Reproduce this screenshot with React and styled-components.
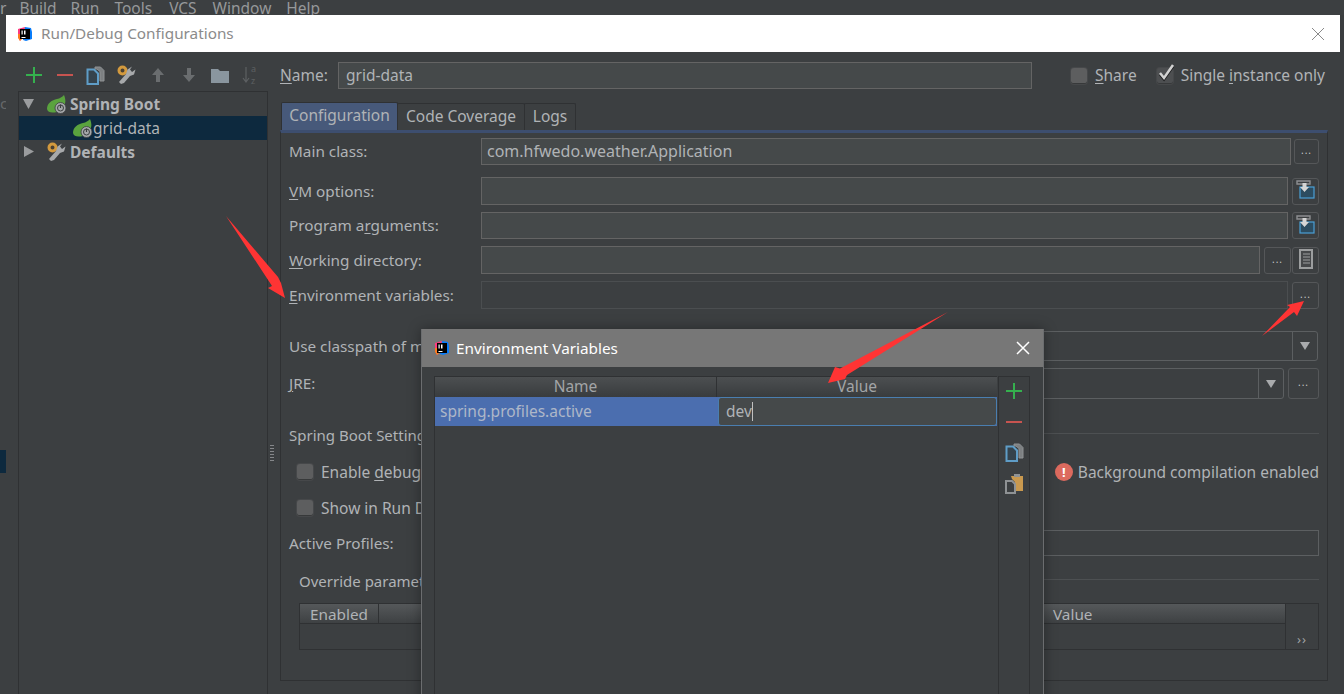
import React from 'react';
import styled, { createGlobalStyle } from 'styled-components';

const Global = createGlobalStyle`
  html, body { margin: 0; padding: 0; background: #3c3f41; overflow: hidden; }
  #root { height: 694px; }
`;

const FONT = `"Noto Sans", "Open Sans", sans-serif`;

const Page = styled.div`
  position: relative; width: 1344px; height: 694px; overflow: hidden;
  display: flex; flex-direction: column; background: #3c3f41;
  font: 15.5px/20px ${FONT}; color: #b0b3b6;
`;
const MenuBar = styled.div`
  height: 15px; flex: none; display: flex; overflow: hidden; color: #96989a; line-height: 17px;
`;
const MenuItem = styled.span`margin-left: ${p => p.$left}px; white-space: nowrap;`;
const Desk = styled.div`flex: 1; min-height: 0; display: flex;`;
const LeftStrip = styled.div`
  width: 6px; flex: none; overflow: hidden; display: flex; flex-direction: column; color: #66686a;
`;
const StripHint = styled.span`margin: 78px 0 0 0; font-size: 15px; white-space: nowrap;`;
const StripSelection = styled.div`height: 23px; margin-top: 337px; background: #0d293e;`;
const RightStrip = styled.div`width: 4px; flex: none; background: #3a3d3f;`;
const Window = styled.div`flex: 1; min-width: 0; display: flex; flex-direction: column;`;
const TitleBar = styled.div`
  height: 37px; flex: none; background: #fff; display: flex; align-items: center; box-sizing: border-box;
  padding: 0 15px 0 11px; color: #8b8b8b; gap: 8px;
`;
const TitleText = styled.span`flex: 1; margin-bottom: 2px; white-space: nowrap; font-size: 15.3px;`;
const Body = styled.div`flex: 1; min-height: 0; display: flex;`;
const LeftPane = styled.div`width: 262px; flex: none; display: flex; flex-direction: column; padding-left: 12px; box-sizing: border-box;`;
const Toolbar = styled.div`height: 39px; box-sizing: border-box; flex: none; display: flex; align-items: center; padding: 7px 0 0 0;`;
const ToolSlot = styled.span`width: 31px; flex: none; display: flex; justify-content: center;`;
const Tree = styled.div`
  flex: 1; border: 1px solid #2f3133; border-bottom: 0; display: flex; flex-direction: column;
`;
const TreeRow = styled.div`
  height: 24px; display: flex; align-items: center; box-sizing: border-box;
  padding-left: ${p => p.$indent}px; gap: ${p => p.$gap}px;
  background: ${p => (p.$selected ? '#0d293e' : 'transparent')};
  font-weight: ${p => (p.$bold ? 700 : 400)};
`;
const TreeText = styled.span`margin-left: ${p => p.$left || 0}px; margin-bottom: 1px;`;
const RightPane = styled.div`
  position: relative; flex: 1; min-width: 0; display: flex; flex-direction: column; padding: 0 12px 0 12px;
`;
const Grip = styled.div`
  position: absolute; left: 2px; top: 393px; width: 4px; height: 18px;
  background: repeating-linear-gradient(#85878a 0 1px, transparent 1px 3px);
`;
const NameRow = styled.div`
  height: 27px; margin-top: 10px; flex: none; display: flex; align-items: center;
`;
const NameLabel = styled.span`width: 58px; flex: none; margin-bottom: 2px;`;
const NameField = styled.div`
  width: 694px; height: 27px; box-sizing: border-box; background: #45494a; border: 1px solid #646464;
  padding: 0 7px; line-height: 25px; flex: none;
`;
const Flag = styled.label`display: flex; align-items: center; gap: 8px; margin-left: ${p => p.$left}px; flex: none; white-space: nowrap;`;
const FlagText = styled.span`margin-bottom: 2px;`;
const Box = styled.span`
  width: 16px; height: 16px; flex: none; box-sizing: border-box; border-radius: 3px;
  background: ${p => (p.$checked ? '#4d4f51' : '#5d5e5f')}; border-bottom: 1px solid #37393a;
  box-shadow: 0 0 0 1px #46484a; display: flex; align-items: center; justify-content: center; overflow: visible;
`;
const Tabs = styled.div`margin-top: 13px; height: 28px; flex: none; display: flex; align-items: flex-end; padding-left: 1px;`;
const Tab = styled.div`
  width: ${p => p.$w}px; height: ${p => (p.$active ? 28 : 27)}px; box-sizing: border-box; padding-bottom: 3px; white-space: nowrap;
  display: flex; align-items: center; justify-content: center; background: ${p => (p.$active ? '#47597a' : 'transparent')};
  border: 1px solid #2f3133; border-bottom: 0; margin-right: -1px; border-radius: 2px 2px 0 0;
`;
const Panel = styled.div`
  flex: 1; min-height: 0; margin-bottom: 13px; border: 1px solid #2f3133; border-top: 3px solid #3d4e6f;
  padding: 5px 8px 0 8px; display: flex; flex-direction: column; box-sizing: border-box;
`;
const FormRow = styled.div`
  height: ${p => p.$h}px; margin-top: ${p => p.$gap || 0}px; flex: none; display: flex; align-items: center;
`;
const Label = styled.span`width: 192px; flex: none; white-space: nowrap; margin-bottom: 1px; font-size: 15.3px;`;
const Mn = styled.u`text-underline-offset: 2px; text-decoration-thickness: 1px;`;
const Field = styled.div`
  flex: 1; min-width: 0; align-self: stretch; box-sizing: border-box; padding: 0 5px; line-height: 24px;
  font-size: ${p => (p.$wide ? '16px' : 'inherit')};
  background: ${p => (p.$flat ? 'transparent' : '#45494a')};
  border: 1px solid ${p => (p.$flat ? '#4b4e50' : '#646464')};
  margin-right: ${p => p.$mr ?? 4}px;
`;
const ActiveField = styled(Field)`border-color: #5c5f61;`;
const Dots = styled.button`
  width: ${p => p.$w || 27}px; height: ${p => p.$h || 27}px; flex: none; padding: 0 0 3px; box-sizing: border-box;
  background: transparent; border: 1px solid #555759; border-radius: 3px; color: #c8c8c8;
  font: 10px/10px ${FONT}; letter-spacing: 1px; display: flex; align-items: center; justify-content: center;
  margin-right: ${p => p.$mr || 0}px;
`;
const Combo = styled.div`
  flex: 1; align-self: stretch; box-sizing: border-box; border: 1px solid #5c5f61; border-radius: 3px;
  display: flex; justify-content: flex-end; margin-right: ${p => p.$mr || 0}px;
`;
const ComboArrow = styled.span`
  width: 24px; border-left: 1px solid #5c5f61; display: flex; align-items: center; justify-content: center;
`;
const Caret = styled.span`
  width: 0; height: 0; border-left: 5px solid transparent; border-right: 5px solid transparent; border-top: 8px solid #a9abad;
`;
const SectionRow = styled.div`
  height: 20px; margin-top: ${p => p.$gap}px; margin-left: ${p => p.$indent || 0}px; flex: none;
  display: flex; align-items: center; gap: 6px; white-space: nowrap;
`;
const SectionText = styled.span`margin-bottom: 1px; font-size: 15px;`;
const Rule = styled.span`flex: 1; height: 1px; background: #4d5052; margin-top: -4px;`;
const OptionRow = styled.div`
  height: 20px; margin-top: ${p => p.$gap}px; flex: none; display: flex; align-items: center; padding-left: 8px;
`;
const Option = styled.span`flex: 1; display: flex; align-items: center; gap: 8px; white-space: nowrap;`;
const OptionText = styled.span`margin-bottom: 1px;`;
const Warning = styled.span`display: flex; align-items: center; gap: 5px; white-space: nowrap;`;
const WarnDot = styled.span`
  width: 18px; height: 18px; border-radius: 50%; background: #dc6a5e; color: #fff; font-weight: 700;
  font-size: 13px; line-height: 18px; text-align: center;
`;
const ParamTable = styled.div`
  margin: 12px 0 0 10px; height: 47px; flex: none; box-sizing: border-box; border: 1px solid #2f3133;
  display: grid; grid-template-columns: 1fr 32px; grid-template-rows: 20px 1fr;
`;
const ParamHead = styled.div`
  display: grid; grid-template-columns: 79px 1fr 243px;
  background: linear-gradient(#55585a, #3e4143); border-bottom: 1px solid #2f3133; border-right: 1px solid #2f3133;
`;
const HeadCell = styled.span`
  padding-left: ${p => p.$pad}px; line-height: 20px; font-size: 15.3px; text-align: ${p => p.$align || 'left'};
  border-right: ${p => (p.$last ? 0 : '1px solid #2f3133')};
`;
const Corner = styled.div`
  grid-row: 1 / 3; grid-column: 2; display: flex; align-items: flex-end; justify-content: center;
  padding-bottom: 3px; color: #a0a2a4; font-size: 13px; line-height: 14px; letter-spacing: 1px;
`;
const ParamBody = styled.div`border-right: 1px solid #2f3133;`;
const Dialog = styled.div`
  position: absolute; left: 421px; top: 329px; width: 623px; height: 400px; box-sizing: border-box;
  background: #3c3f41; border: 1px solid #6b6d6f; border-top: 0;
  box-shadow: 0 0 12px rgba(0, 0, 0, .35); display: flex; flex-direction: column;
`;
const DialogTitle = styled.div`
  height: 38px; flex: none; background: #777; color: #fff; display: flex; align-items: center;
  padding: 0 13px 0 12px; gap: 6px;
`;
const DialogTitleText = styled.span`flex: 1; white-space: nowrap; font-size: 15.3px;`;
const DialogBody = styled.div`display: flex; padding: 9px 0 0 12px; flex: 1;`;
const EnvTable = styled.div`
  width: 563px; box-sizing: border-box; flex: none; border-left: 1px solid #2f3133;
`;
const EnvHead = styled.div`
  height: 21px; display: grid; grid-template-columns: 282px 1fr;
  background: linear-gradient(#4d5052, #393c3e); box-shadow: inset 0 1px #2f3133;
`;
const EnvHeadCell = styled.span`text-align: center; line-height: 20px; color: #a3a5a7; border-right: ${p => (p.$last ? 0 : '1px solid #2f3133')};`;
const EnvRow = styled.div`
  height: 29px; display: grid; grid-template-columns: 282px 1fr; background: #4b6eaf;
`;
const EnvKey = styled.span`padding-left: 5px; line-height: 28px; color: #aeb7c8;`;
const EnvEdit = styled.div`
  background: #45494a; border: 1px solid #4a7eb0; border-radius: 3px; box-sizing: border-box;
  padding-left: 7px; line-height: 26px; margin-left: 1px; display: flex;
`;
const TextCaret = styled.span`width: 1px; height: 19px; align-self: center; background: #c0c0c0;`;
const SideBar = styled.div`
  width: 32px; box-sizing: border-box; flex: none; border: 1px solid #2f3133; border-bottom: 0; margin-left: 1px;
  display: flex; flex-direction: column; align-items: center;
`;
const SideSlot = styled.span`height: 31px; width: 100%; box-sizing: border-box; padding-bottom: 4px; flex: none; display: flex; align-items: center; justify-content: center;`;
const ArrowLayer = styled.svg`position: absolute; left: 0; top: 0; pointer-events: none;`;

const Idea = () => (
  <svg width="16" height="16" viewBox="0 0 16 16" style={{ flex: 'none' }}>
    <path fill="#fc3a7f" d="M1 3 8 1 7 9 3 15 1 10z" />
    <path fill="#fe7c1f" d="M1 8 5 8 5 13 3 15 1 12z" />
    <path fill="#087cfa" d="M8 1 14 2 15 6 15 13 9 15 6 14z" />
    <rect x="3" y="3" width="10" height="10" fill="#000" />
    <rect x="4.500" y="4.500" width="1.200" height="4" fill="#fff" />
    <rect x="7" y="4.500" width="1.500" height="4" fill="#fff" />
    <rect x="4.500" y="11" width="4" height="1" fill="#fff" />
  </svg>
);
const Plus = () => (
  <svg width="16" height="16" viewBox="0 0 16 16"><path d="M8 0v16M0 8h16" stroke="#35b04e" strokeWidth="2" /></svg>
);
const Minus = () => (
  <svg width="16" height="16" viewBox="0 0 16 16"><path d="M0 8h16" stroke="#c75450" strokeWidth="2" /></svg>
);
const Copy = () => (
  <svg width="19" height="19" viewBox="0 0 19 19">
    <path d="M9 1h5.500L18 4.500V15h-4V5.500L11 3H9z" fill="#7d8082" stroke="#8f9294" strokeWidth="1" />
    <path d="M1.500 3.500h6.500l4 4V18h-10.500z" fill="#35434d" stroke="#5f9dc7" strokeWidth="2" />
  </svg>
);
const Paste = () => (
  <svg width="19" height="20" viewBox="0 0 19 20">
    <path d="M6 2h12v15H10V8L7 5z" fill="#c9994f" />
    <rect x="9" y="0" width="6" height="3" fill="#8f9294" />
    <path d="M1 7h6l3 3v9H1z" fill="#3c3f41" stroke="#8f9294" strokeWidth="2" />
  </svg>
);
const Wrench = () => (
  <svg width="20" height="20" viewBox="0 0 20 20" style={{ flex: 'none' }}>
    <circle cx="5.500" cy="5.500" r="3.500" fill="#4a4032" stroke="#d39a3e" strokeWidth="3" />
    <path d="M2 17l7-8 1.500-4.500L15 1.500 13 4.500l2 2.500 3.500-2.500L17 9.500l-4 1.500-6 7-3 1z" fill="#a7a9ab" />
  </svg>
);
const Up = () => (<svg width="16" height="16" viewBox="0 0 16 16"><path d="M8 1l6 7h-4v7H6V8H2z" fill="#6a6d6f" /></svg>);
const Down = () => (<svg width="16" height="16" viewBox="0 0 16 16"><path d="M8 15l6-7h-4V1H6v7H2z" fill="#6a6d6f" /></svg>);
const Folder = () => (<svg width="18" height="15" viewBox="0 0 18 15"><path d="M0 1h7l2 2h9v12H0z" fill="#8a969f" /></svg>);
const Sort = () => (
  <svg width="18" height="20" viewBox="0 0 18 20">
    <path d="M4 2v15M1 13l3 4 3-4" fill="none" stroke="#5d6062" strokeWidth="1.200" />
    <text x="9" y="7" fontSize="9" fill="#5d6062" fontFamily="Noto Sans">a</text>
    <text x="9" y="19" fontSize="9" fill="#5d6062" fontFamily="Noto Sans">z</text>
  </svg>
);
const Spring = () => (
  <svg width="20" height="19" viewBox="0 0 20 19" style={{ flex: 'none' }}>
    <path d="M0 14C0 8 5 5 10 4c3-.6 5-2 7-4 2 5 2 9-1 11l-6 6c-5 1-9 1-10-3z" fill="#5aa33e" />
    <circle cx="13.500" cy="13" r="5.500" fill="#a5a7a9" stroke="#3c3f41" strokeWidth=".8" />
    <circle cx="13.500" cy="13" r="3" fill="none" stroke="#3c3f41" strokeWidth="1" />
    <path d="M13.500 9.500v3.500" stroke="#3c3f41" strokeWidth="1.200" />
  </svg>
);
const Import = () => (
  <svg width="19" height="19" viewBox="0 0 19 19">
    <path d="M1 1h13v3H1z" fill="none" stroke="#8d8f91" strokeWidth="1.400" />
    <rect x="4" y="7" width="14" height="11" fill="#2c4c60" stroke="#4a9fd6" strokeWidth="1.200" />
    <path d="M6.500 3v4H4l4.500 5 4.500-5h-2.500V3z" fill="#d5d5d5" />
  </svg>
);
const Doc = () => (
  <svg width="14" height="20" viewBox="0 0 14 20">
    <rect width="14" height="20" fill="#9c9e9f" />
    <rect x="2" y="2" width="10" height="16" fill="#46484a" />
    <path d="M4 5h7M4 8h7M4 11h7M4 14h7" stroke="#9c9e9f" />
  </svg>
);
const Close = ({ color, width = 1 }) => (
  <svg width="14" height="14" viewBox="0 0 14 14"><path d="M1 1l12 12M13 1L1 13" stroke={color} strokeWidth={width} /></svg>
);
const Tri = ({ dir }) => (
  <svg width="12" height="12" viewBox="0 0 12 12" style={{ flex: 'none' }}>
    <path d={dir === 'down' ? 'M0 1h11L5.500 11z' : 'M1 0v11L11 5.500z'} fill="#9a9c9e" />
  </svg>
);
const Check = () => (
  <svg width="18" height="18" viewBox="0 0 18 18" style={{ flex: 'none', marginTop: -5, marginRight: -3 }}>
    <path d="M3 9l4 5 9-13" fill="none" stroke="#1f2021" strokeWidth="2.500" transform="translate(0 1.500)" />
    <path d="M3 9l4 5 9-13" fill="none" stroke="#d2d2d2" strokeWidth="2.500" />
  </svg>
);

const menu = [['r', 0], ['Build', 13], ['Run', 14], ['Tools', 15], ['VCS', 17], ['Window', 16], ['Help', 15]];

export default function App() {
  return (
    <Page>
      <Global />
      <MenuBar>{menu.map(([t, l]) => <MenuItem key={t} $left={l}>{t}</MenuItem>)}</MenuBar>
      <Desk>
        <LeftStrip>
          <StripHint>ce</StripHint>
          <StripSelection />
        </LeftStrip>
        <Window>
          <TitleBar>
            <Idea />
            <TitleText>Run/Debug Configurations</TitleText>
            <Close color="#8a8a8a" />
          </TitleBar>
          <Body>
            <LeftPane>
              <Toolbar>
                <ToolSlot><Plus /></ToolSlot>
                <ToolSlot><Minus /></ToolSlot>
                <ToolSlot><Copy /></ToolSlot>
                <ToolSlot><Wrench /></ToolSlot>
                <ToolSlot><Up /></ToolSlot>
                <ToolSlot><Down /></ToolSlot>
                <ToolSlot><Folder /></ToolSlot>
                <ToolSlot><Sort /></ToolSlot>
              </Toolbar>
              <Tree>
                <TreeRow $indent={4} $gap={12} $bold><Tri dir="down" /><Spring /><TreeText $left={-9}>Spring Boot</TreeText></TreeRow>
                <TreeRow $indent={54} $gap={0} $selected><Spring /><TreeText>grid-data</TreeText></TreeRow>
                <TreeRow $indent={4} $gap={12} $bold><Tri dir="right" /><Wrench /><TreeText $left={-9}>Defaults</TreeText></TreeRow>
              </Tree>
            </LeftPane>
            <RightPane>
              <Grip />
              <NameRow>
                <NameLabel><Mn>N</Mn>ame:</NameLabel>
                <NameField>grid-data</NameField>
                <Flag $left={39}><Box /><FlagText><Mn>S</Mn>hare</FlagText></Flag>
                <Flag $left={20}><Box $checked><Check /></Box><FlagText>Single <Mn>i</Mn>nstance only</FlagText></Flag>
              </NameRow>
              <Tabs>
                <Tab $active $w={117}>Configuration</Tab>
                <Tab $w={128}>Code Coverage</Tab>
                <Tab $w={52}>Logs</Tab>
              </Tabs>
              <Panel>
                <FormRow $h={27}>
                  <Label>Main class:</Label>
                  <Field $mr={3} $wide>com.hfwedo.weather.Application</Field>
                  <Dots $w={25} $h={25}>...</Dots>
                </FormRow>
                <FormRow $h={28} $gap={12}>
                  <Label><Mn>V</Mn>M options:</Label>
                  <Field />
                  <Dots><Import /></Dots>
                </FormRow>
                <FormRow $h={27} $gap={7}>
                  <Label>Program a<Mn>r</Mn>guments:</Label>
                  <Field />
                  <Dots><Import /></Dots>
                </FormRow>
                <FormRow $h={28} $gap={7}>
                  <Label><Mn>W</Mn>orking directory:</Label>
                  <Field />
                  <Dots $mr={1}>...</Dots>
                  <Dots><Doc /></Dots>
                </FormRow>
                <FormRow $h={28} $gap={7}>
                  <Label><Mn>E</Mn>nvironment variables:</Label>
                  <Field $flat />
                  <Dots>...</Dots>
                </FormRow>
                <FormRow $h={30} $gap={22}>
                  <Label>Use classpath of module:</Label>
                  <Combo $mr={1}><ComboArrow><Caret /></ComboArrow></Combo>
                </FormRow>
                <FormRow $h={31} $gap={7}>
                  <Label><Mn>J</Mn>RE:</Label>
                  <Combo $mr={4}><ComboArrow><Caret /></ComboArrow></Combo>
                  <Dots $w={31} $h={31}>...</Dots>
                </FormRow>
                <SectionRow $gap={26}><SectionText>Spring Boot Settings</SectionText><Rule /></SectionRow>
                <OptionRow $gap={17}>
                  <Option><Box /><OptionText>Enable <Mn>d</Mn>ebug output</OptionText></Option>
                  <Warning><WarnDot>!</WarnDot><OptionText>Background compilation enabled</OptionText></Warning>
                </OptionRow>
                <OptionRow $gap={16}>
                  <Option><Box /><OptionText>Show in Run Dashboard</OptionText></Option>
                </OptionRow>
                <FormRow $h={26} $gap={12}>
                  <Label>Active Profiles:</Label>
                  <ActiveField $flat $mr={0} />
                </FormRow>
                <SectionRow $gap={15} $indent={10}><SectionText>Override parameters</SectionText><Rule /></SectionRow>
                <ParamTable>
                  <ParamHead>
                    <HeadCell $pad={10}>Enabled</HeadCell>
                    <HeadCell $pad={0} $align="center">Name</HeadCell>
                    <HeadCell $pad={11} $last>Value</HeadCell>
                  </ParamHead>
                  <Corner>››</Corner>
                  <ParamBody />
                </ParamTable>
              </Panel>
            </RightPane>
          </Body>
        </Window>
        <RightStrip />
      </Desk>
      <Dialog>
        <DialogTitle>
          <Idea />
          <DialogTitleText>Environment Variables</DialogTitleText>
          <Close color="#fff" width={1.5} />
        </DialogTitle>
        <DialogBody>
          <EnvTable>
            <EnvHead>
              <EnvHeadCell>Name</EnvHeadCell>
              <EnvHeadCell $last>Value</EnvHeadCell>
            </EnvHead>
            <EnvRow>
              <EnvKey>spring.profiles.active</EnvKey>
              <EnvEdit>dev<TextCaret /></EnvEdit>
            </EnvRow>
          </EnvTable>
          <SideBar>
            <SideSlot><Plus /></SideSlot>
            <SideSlot><Minus /></SideSlot>
            <SideSlot><Copy /></SideSlot>
            <SideSlot><Paste /></SideSlot>
          </SideBar>
        </DialogBody>
      </Dialog>
      <ArrowLayer width="1344" height="694" viewBox="0 0 1344 694">
        <polygon fill="#ff3434" points="226,216 278,277 281,283 285,298 268,288 272,286" />
        <polygon fill="#ff3434" points="1262,336 1290,307 1287,305 1304,301 1297,316 1294,312" />
        <polygon fill="#ff3434" points="948,312 840,368.500 835,367 828,383 845,379 847,375" />
      </ArrowLayer>
    </Page>
  );
}
